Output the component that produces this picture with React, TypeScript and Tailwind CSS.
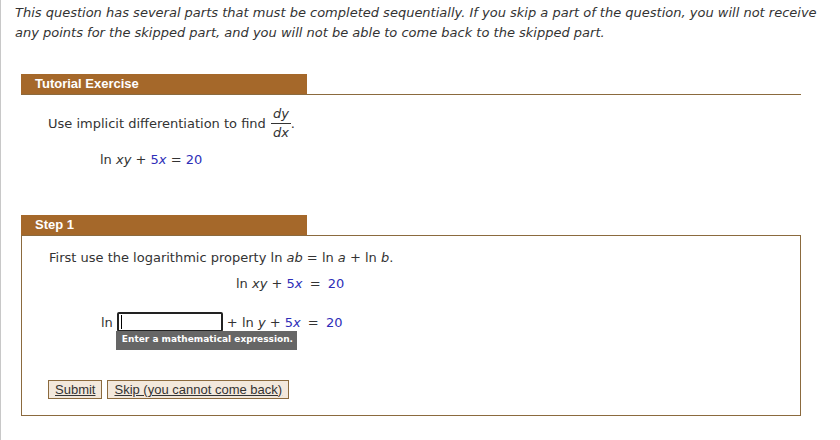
const verdana = { fontFamily: '"DejaVu Sans", Verdana, sans-serif' };

function Blue({ children }: { children: React.ReactNode }) {
  return <span className="text-[#2e2eb8]">{children}</span>;
}

function SectionBar({ title }: { title: string }) {
  return (
    <div className="flex">
      <div className="flex h-[20px] w-[286px] items-center bg-[#a5682a] pl-[14px] font-['Liberation_Sans',Arial,sans-serif] text-[13px] font-bold text-white">
        {title}
      </div>
    </div>
  );
}

function Eq({ lhs }: { lhs: React.ReactNode }) {
  return (
    <>
      {lhs} + <Blue>5<i>x</i></Blue>
      <span className="mx-[3px]"> = </span>
      <Blue>20</Blue>
    </>
  );
}

export default function App() {
  return (
    <div
      className="h-[440px] w-[840px] overflow-hidden border-l border-[#c8c8c8] bg-white text-[13px] text-[#333]"
      style={verdana}
    >
      <p className="pl-[14px] pt-[3px] italic leading-[20px]">
        This question has several parts that must be completed sequentially. If you skip a part of the question, you will not receive
        <br />
        any points for the skipped part, and you will not be able to come back to the skipped part.
      </p>

      {/* Tutorial exercise */}
      <div className="ml-[20px] mt-[31px] w-[780px]">
        <div className="border-b border-[#8b6a3e]">
          <SectionBar title="Tutorial Exercise" />
        </div>
        <div className="flex items-center pl-[27px] pt-[10px]">
          <span>Use implicit differentiation to find</span>
          <span className="ml-[5px] inline-flex flex-col items-center italic leading-[18px]">
            <span className="px-[1px]">dy</span>
            <span className="h-px w-[20px] bg-[#333]" />
            <span className="px-[1px]">dx</span>
          </span>
          <span className="self-center">.</span>
        </div>
        <div className="pl-[79px] pt-[8px]">
          ln <i>xy</i> + <Blue>5<i>x</i></Blue> = <Blue>20</Blue>
        </div>
      </div>

      {/* Step 1 */}
      <div className="ml-[20px] mt-[45px] w-[780px]">
        <SectionBar title="Step 1" />
        <div className="h-[181px] border border-[#8b6a3e] pl-[27px] pt-[12px]">
          <div>
            First use the logarithmic property ln <i>ab</i> = ln <i>a</i> + ln <i>b</i>.
          </div>
          <div className="pl-[187px] pt-[7px]">
            <Eq lhs={<>ln <i>xy</i></>} />
          </div>
          <div className="flex items-start pl-[52px] pt-[18px]">
            <span className="pt-[1px]">ln</span>
            <div className="relative ml-[4px]">
              <div className="flex h-[20px] w-[106px] items-center rounded-[2px] border-2 border-[#222] pl-[2px]">
                <span className="h-[14px] w-px bg-black" />
              </div>
              <div className="absolute left-[-1px] top-[19px] flex h-[19px] w-[181px] items-center whitespace-nowrap bg-[#666] pl-[6px] text-[9px] font-bold text-white">
                Enter a mathematical expression.
              </div>
            </div>
            <span className="ml-[4px] pt-[1px]">
              <Eq lhs={<>+ ln <i>y</i></>} />
            </span>
          </div>
          <div className="ml-[-1px] flex gap-[5px] pt-[48px] font-['Liberation_Sans',Arial,sans-serif] text-[13px]">
            <button className="h-[19px] border border-[#8b6a3e] bg-[#f3e8dc] px-[6px] leading-[16px] text-[#333] underline">
              Submit
            </button>
            <button className="h-[19px] border border-[#8b6a3e] bg-[#f3e8dc] px-[6px] leading-[16px] text-[#333] underline">
              Skip (you cannot come back)
            </button>
          </div>
        </div>
      </div>
    </div>
  );
}
